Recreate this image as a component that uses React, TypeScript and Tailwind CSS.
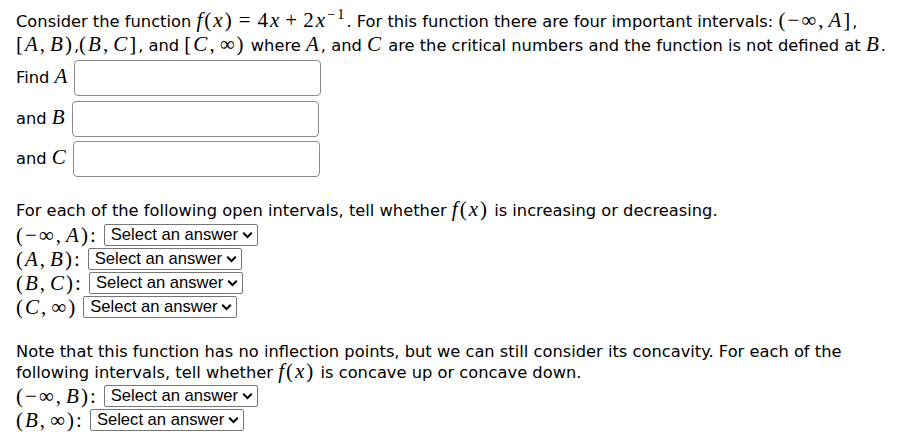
import React from "react";

const M = ({ children }: { children: React.ReactNode }) => (
  <span className="font-['Liberation_Serif',serif] text-[21px] leading-[18px] tracking-[2px] whitespace-nowrap">
    {children}
  </span>
);

const I = ({ children }: { children: React.ReactNode }) => <i className="italic">{children}</i>;
const Th = () => <span className="inline-block w-[3px]" />;
const Md = () => <span className="inline-block w-[4px]" />;
const Tk = () => <span className="inline-block w-[5px]" />;

const Select = () => (
  <div className="inline-flex items-center justify-between h-[22px] w-[154px] border border-[#767676] rounded-[2px] bg-white pl-[6px] pr-[4px] font-['Liberation_Sans',Arial,sans-serif] text-[16.6px] leading-none text-black">
    <span className="whitespace-nowrap">Select an answer</span>
    <svg width="11" height="8" viewBox="0 0 11 8" className="shrink-0">
      <path d="M1.2 1.8 L5.5 6 L9.8 1.8" fill="none" stroke="#000" strokeWidth="2" />
    </svg>
  </div>
);

const Input = () => (
  <div className="h-9 w-[247px] border border-[#8a8a8a] rounded-[4px] bg-white" />
);

const SelRow = ({ label }: { label: React.ReactNode }) => (
  <div className="flex items-center h-6 gap-[6px]">
    {label}
    <Select />
  </div>
);

export default function App() {
  return (
    <div className="bg-white w-[918px] h-[437px] pt-[10px] px-4 text-black font-['DejaVu_Sans',Verdana,sans-serif] text-[16.3px] overflow-hidden">
      <p className="leading-[24px] whitespace-nowrap">
        Consider the function{" "}
        <M>
          <I>f</I>(<I>x</I>)<Tk />=<Tk />4<I>x</I>
          <Md />+<Md />2<I>x</I>
          <span className="text-[14.5px] relative top-[-8px]">−1</span>
        </M>
        . For this function there are four important intervals:{" "}
        <M>
          (−∞,<Th />
          <I>A</I>]
        </M>
        ,
        <br />
        <M>
          [<I>A</I>,<Th />
          <I>B</I>)
        </M>
        ,
        <M>
          (<I>B</I>,<Th />
          <I>C</I>]
        </M>
        , and{" "}
        <M>
          [<I>C</I>,<Th />∞)
        </M>{" "}
        where{" "}
        <M>
          <I>A</I>
        </M>
        , and{" "}
        <M>
          <I>C</I>
        </M>{" "}
        are the critical numbers and the function is not defined at{" "}
        <M>
          <I>B</I>
        </M>
        .
      </p>

      <div className="mt-[2px] flex items-center h-9 gap-[5px]">
        <span>
          Find{" "}
          <M>
            <I>A</I>
          </M>
        </span>
        <Input />
      </div>
      <div className="mt-[5px] flex items-center h-9 gap-[5px]">
        <span>
          and{" "}
          <M>
            <I>B</I>
          </M>
        </span>
        <Input />
      </div>
      <div className="mt-[4px] flex items-center h-9 gap-[5px]">
        <span>
          and{" "}
          <M>
            <I>C</I>
          </M>
        </span>
        <Input />
      </div>

      <p className="mt-[22px] leading-[24px] whitespace-nowrap">
        For each of the following open intervals, tell whether{" "}
        <M>
          <I>f</I>(<I>x</I>)
        </M>{" "}
        is increasing or decreasing.
      </p>
      <SelRow
        label={
          <M>
            (−∞,<Th />
            <I>A</I>):
          </M>
        }
      />
      <SelRow
        label={
          <M>
            (<I>A</I>,<Th />
            <I>B</I>):
          </M>
        }
      />
      <SelRow
        label={
          <M>
            (<I>B</I>,<Th />
            <I>C</I>):
          </M>
        }
      />
      <SelRow
        label={
          <M>
            (<I>C</I>,<Th />∞)
          </M>
        }
      />

      <p className="mt-[22px] leading-[21px] whitespace-nowrap">
        Note that this function has no inflection points, but we can still consider its concavity. For each of the
        <br />
        following intervals, tell whether{" "}
        <M>
          <I>f</I>(<I>x</I>)
        </M>{" "}
        is concave up or concave down.
      </p>
      <div className="mt-[1px]">
        <SelRow
          label={
            <M>
              (−∞,<Th />
              <I>B</I>):
            </M>
          }
        />
        <SelRow
          label={
            <M>
              (<I>B</I>,<Th />∞):
            </M>
          }
        />
      </div>
    </div>
  );
}
